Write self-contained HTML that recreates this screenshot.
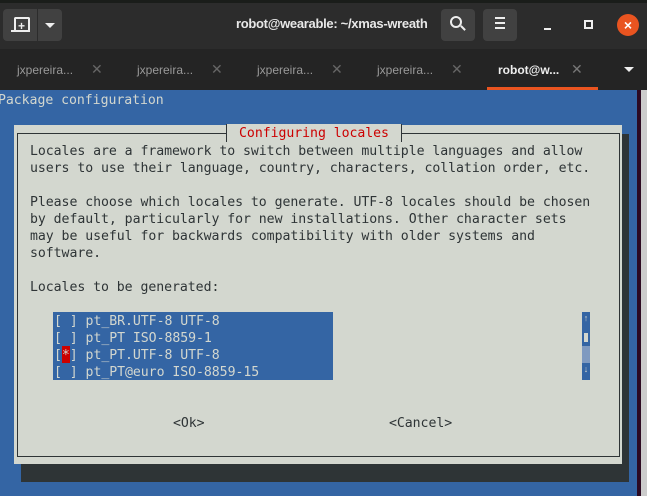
<!DOCTYPE html>
<html><head><style>
body{margin:0;width:647px;height:496px;overflow:hidden;background:#3465a4;position:relative;font-family:"Liberation Sans",sans-serif}
.a{position:absolute}
.m{font-family:"DejaVu Sans Mono","Liberation Mono",monospace;font-size:13.2px;white-space:pre;line-height:17px;letter-spacing:-0.05px}
</style></head><body>
<div class="a" style="left:0;top:0;width:647px;height:49px;background:#2c2c2c"></div>
<div class="a" style="left:0;top:0;width:647px;height:3px;background:#1a1d1a"></div>
<div class="a" style="left:3px;top:9px;width:59px;height:32px;background:#414141;border-radius:4px"></div>
<div class="a" style="left:37px;top:9px;width:1px;height:32px;background:#2c2c2c"></div>
<div class="a" style="left:14px;top:17px;width:12px;height:12px;border:2px solid #eee;border-bottom:none;border-radius:2px 2px 0 0"></div>
<div class="a" style="left:11px;top:30px;width:19px;height:2px;background:#eee"></div>
<div class="a" style="left:18px;top:19px;color:#eee;font-size:12px;font-weight:bold">+</div>
<div class="a" style="left:45px;top:23px;border-left:5px solid transparent;border-right:5px solid transparent;border-top:5px solid #eee"></div>
<div class="a" style="left:236px;top:16px;color:#e8e8e8;font-size:13px;font-weight:bold;letter-spacing:-0.3px">robot@wearable: ~/xmas-wreath</div>
<div class="a" style="left:441px;top:9px;width:34px;height:32px;background:#414141;border-radius:4px"></div>
<div class="a" style="left:450px;top:16px;width:8px;height:8px;border:2px solid #eee;border-radius:50%"></div>
<div class="a" style="left:460px;top:27px;width:6px;height:2px;background:#eee;transform:rotate(45deg)"></div>
<div class="a" style="left:483px;top:9px;width:34px;height:32px;background:#414141;border-radius:4px"></div>
<div class="a" style="left:495px;top:17px;width:10px;height:2px;background:#eee;box-shadow:0 5px 0 #eee,0 10px 0 #eee"></div>
<div class="a" style="left:544px;top:28px;width:7px;height:2px;background:#eee"></div>
<div class="a" style="left:584px;top:20px;width:5px;height:5px;border:2px solid #eee"></div>
<div class="a" style="left:617px;top:14px;width:22px;height:22px;background:#e95420;border-radius:50%;color:#fff;font-size:14px;font-weight:bold;text-align:center;line-height:22px">×</div>
<div class="a" style="left:0;top:49px;width:647px;height:41px;background:#242424"></div>
<div class="a" style="left:17px;top:63px;color:#999;font-size:12px">jxpereira...</div><div class="a" style="left:91px;top:61px;color:#666;font-size:14px">✕</div>
<div class="a" style="left:137px;top:63px;color:#999;font-size:12px">jxpereira...</div><div class="a" style="left:211px;top:61px;color:#666;font-size:14px">✕</div>
<div class="a" style="left:257px;top:63px;color:#999;font-size:12px">jxpereira...</div><div class="a" style="left:331px;top:61px;color:#666;font-size:14px">✕</div>
<div class="a" style="left:377px;top:63px;color:#999;font-size:12px">jxpereira...</div><div class="a" style="left:451px;top:61px;color:#666;font-size:14px">✕</div>
<div class="a" style="left:498px;top:63px;color:#eee;font-size:12px;font-weight:bold">robot@w...</div><div class="a" style="left:571px;top:61px;color:#777;font-size:14px">✕</div>
<div class="a" style="left:487px;top:87px;width:111px;height:3px;background:#e95420"></div>
<div class="a" style="left:624px;top:67px;border-left:5px solid transparent;border-right:5px solid transparent;border-top:5px solid #eee"></div>
<div class="a" style="left:637px;top:90px;width:4px;height:406px;background:#2c0a22"></div>
<div class="a" style="left:641px;top:90px;width:6px;height:406px;background:#ccc"></div>
<div class="a m" style="left:-2px;top:92px;color:#d3d7cf">Package configuration</div>
<div class="a" style="left:21px;top:134px;width:608px;height:348px;background:#2e3436"></div>
<div class="a" style="left:14px;top:125px;width:608px;height:339px;background:#d3d7cf"></div>
<div class="a" style="left:17px;top:133px;width:601px;height:322px;border:1px solid #2e3436"></div>
<div class="a m" style="left:226px;top:124px;width:174px;height:18px;background:#d3d7cf;border-left:1px solid #2e3436;border-right:1px solid #2e3436;color:#cc0000;text-align:center;line-height:19px">Configuring locales</div>
<div class="a m" style="left:30px;top:143px;color:#2e3436">Locales are a framework to switch between multiple languages and allow
users to use their language, country, characters, collation order, etc.

Please choose which locales to generate. UTF-8 locales should be chosen
by default, particularly for new installations. Other character sets
may be useful for backwards compatibility with older systems and
software.

Locales to be generated:</div>
<div class="a" style="left:53px;top:312px;width:280px;height:68px;background:#3465a4"></div>
<div class="a" style="left:62px;top:346px;width:8px;height:17px;background:#cc0000"></div>
<div class="a m" style="left:54px;top:313px;color:#d3d7cf">[ ] pt_BR.UTF-8 UTF-8
[ ] pt_PT ISO-8859-1
[*] pt_PT.UTF-8 UTF-8
[ ] pt_PT@euro ISO-8859-15</div>
<div class="a" style="left:582px;top:312px;width:8px;height:68px;background:#3465a4"></div>
<div class="a" style="left:582px;top:346px;width:8px;height:17px;background:#7f9ac0"></div>
<div class="a" style="left:584px;top:333px;width:4px;height:9px;background:#d3d7cf"></div>
<div class="a" style="left:582px;top:313px;width:8px;color:#d3d7cf;font-size:9px;text-align:center">↑</div>
<div class="a" style="left:582px;top:364px;width:8px;color:#d3d7cf;font-size:9px;text-align:center">↓</div>
<div class="a m" style="left:173px;top:415px;color:#2e3436">&lt;Ok&gt;</div>
<div class="a m" style="left:389px;top:415px;color:#2e3436">&lt;Cancel&gt;</div>
</body></html>
